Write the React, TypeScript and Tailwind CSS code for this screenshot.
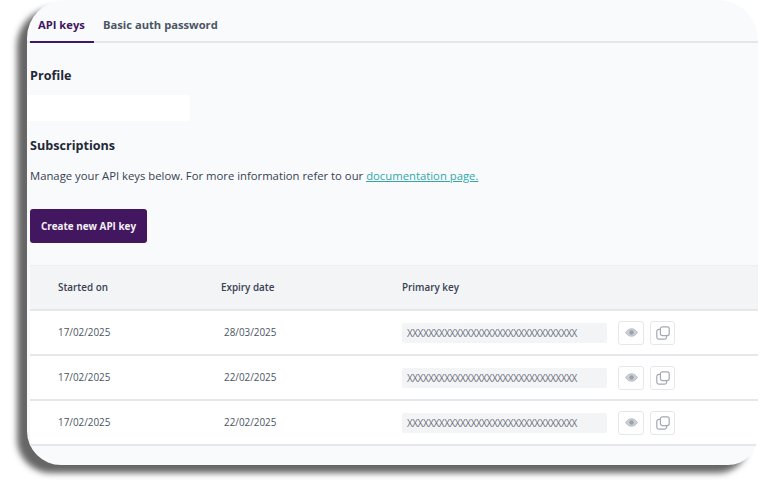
import React from 'react';

const rows = [
  { started: '17/02/2025', expiry: '28/03/2025' },
  { started: '17/02/2025', expiry: '22/02/2025' },
  { started: '17/02/2025', expiry: '22/02/2025' },
];

const maskedKey = 'X'.repeat(32);

function EyeIcon() {
  return (
    <svg width="13" height="9" viewBox="0 0 14 10" fill="none">
      <path d="M0.5 5C2.2 2.2 4.4 0.8 7 0.8S11.8 2.2 13.5 5C11.8 7.8 9.6 9.2 7 9.2S2.2 7.8 0.5 5Z" fill="#ccd0d6" stroke="#a8aeb7" strokeWidth="0.8" />
      <circle cx="7" cy="5" r="2.5" fill="#9aa1ab" />
    </svg>
  );
}

function CopyIcon() {
  return (
    <svg width="14" height="14" viewBox="0 0 14 14" fill="none" stroke="#a3a9b3" strokeWidth="1.2">
      <rect x="4.4" y="0.8" width="8.8" height="8.8" rx="2" />
      <path d="M4.4 3.4H3A2.2 2.2 0 0 0 0.8 5.6V11A2.2 2.2 0 0 0 3 13.2H8.4A2.2 2.2 0 0 0 10.6 11V9.6" />
    </svg>
  );
}

export default function App() {
  return (
    <div className="w-[768px] h-[488px] bg-white pl-[27px] pr-[10px] overflow-hidden font-['Open_Sans',sans-serif]">
      <div className="h-[465px] bg-[#f9fafc] rounded-tl-[38px] rounded-tr-[40px] rounded-bl-[34px] rounded-br-[30px] shadow-[-10px_8px_6px_#666666] overflow-hidden">
        <div className="h-[43px] border-b-2 border-[#e5e7eb] flex pl-[3px]">
          <div className="w-[64px] h-[43px] border-b-2 border-[#3f1762] pl-[8px] pt-[17px] text-[11.2px] leading-[16px] font-bold text-[#3f1762]">
            API keys
          </div>
          <div className="pl-[9px] pt-[17px] text-[11.2px] leading-[16px] font-bold text-[#4b5563]">
            Basic auth password
          </div>
        </div>

        <div className="pl-[3px]">
          <h2 className="mt-[23px] text-[12.6px] leading-[20px] font-bold text-[#1f2937]">Profile</h2>
          <div className="-ml-[3px] mt-[9px] w-[163px] h-[26px] bg-white" />
          <h2 className="mt-[15px] text-[12.6px] leading-[20px] font-bold text-[#1f2937]">Subscriptions</h2>
          <p className="mt-[10px] text-[11.3px] leading-[20px] text-[#374151]">
            Manage your API keys below. For more information refer to our{' '}
            <a className="text-[#2fa8a8] underline">documentation page.</a>
          </p>
          <button className="mt-[23px] block w-[117px] h-[34px] rounded-[3px] bg-[#43175f] text-[9.9px] font-bold text-[#f3f0f6]">
            Create new API key
          </button>

          <div className="mt-[22px]">
            <div className="h-[46px] bg-[#f3f4f6] border-t border-b-2 border-t-[#eeeff2] border-b-[#e5e7eb] flex items-center text-[9.9px] font-semibold text-[#374151]">
              <div className="w-[191px] pl-[28px]">Started on</div>
              <div className="w-[181px]">Expiry date</div>
              <div>Primary key</div>
            </div>
            {rows.map((row, i) => (
              <div key={i} className="h-[45px] bg-white border-b-2 border-[#e5e7eb] flex items-center text-[9.9px] text-[#4b5563]">
                <div className="w-[191px] pl-[28px]">{row.started}</div>
                <div className="w-[181px] pl-[3px]">{row.expiry}</div>
                <div className="w-[205px] h-[20px] pl-[5px] bg-[#f3f4f6] rounded-[2px] text-[10px] leading-[20px] tracking-[-0.47px] text-[#6b7280] overflow-hidden">
                  {maskedKey}
                </div>
                <button className="ml-[11px] w-[26px] h-[24px] flex items-center justify-center bg-white border border-[#e5e7eb] rounded-[3px]">
                  <EyeIcon />
                </button>
                <button className="ml-[6px] w-[25px] h-[24px] flex items-center justify-center bg-white border border-[#e5e7eb] rounded-[3px]">
                  <CopyIcon />
                </button>
              </div>
            ))}
          </div>
        </div>
      </div>
    </div>
  );
}
